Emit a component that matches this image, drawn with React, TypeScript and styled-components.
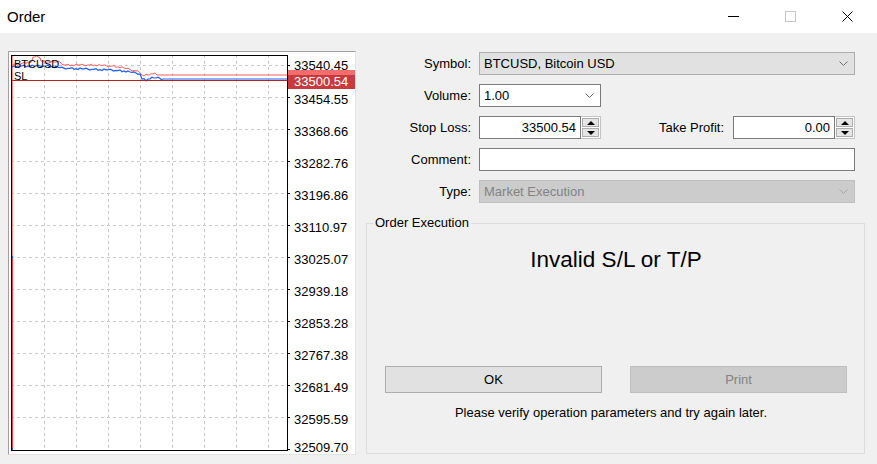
import React from 'react'
import styled, { createGlobalStyle } from 'styled-components'

const GlobalStyle = createGlobalStyle`
  html, body {
    margin: 0;
    padding: 0;
    background: #f0f0f0;
  }
  body {
    font-family: "Liberation Sans", Arial, sans-serif;
    font-size: 13px;
    color: #000;
  }
`

const Window = styled.div`
  width: 877px;
  height: 464px;
  display: flex;
  flex-direction: column;
  background: #f0f0f0;
  overflow: hidden;
`

const TitleBar = styled.div`
  height: 33px;
  flex-shrink: 0;
  background: #fff;
  display: flex;
  align-items: center;
  padding-right: 1px;
`

const Title = styled.div`
  flex: 1;
  padding-left: 7px;
  font-size: 15px;
  color: #000;
`

const CaptionButton = styled.div`
  width: 57px;
  height: 33px;
  display: flex;
  align-items: center;
  justify-content: center;
`

const Body = styled.div`
  flex: 1;
  display: flex;
  padding: 18px 0 10px 8px;
  min-height: 0;
`

const ChartPanel = styled.div`
  width: 348px;
  height: 404px;
  box-sizing: border-box;
  background: #fff;
  border: 1px solid;
  border-color: #a0a0a0 #e3e3e3 #e3e3e3 #a0a0a0;
  flex-shrink: 0;

  svg {
    display: block;
  }
`

const Side = styled.div`
  width: 499px;
  margin-left: 10px;
  padding-top: 1px;
  display: flex;
  flex-direction: column;
`

const FormGrid = styled.div`
  display: grid;
  grid-template-columns: 105px 376px;
  grid-auto-rows: 23px;
  column-gap: 8px;
  row-gap: 9px;
`

const Label = styled.div`
  text-align: right;
  align-self: center;
  white-space: nowrap;
`

type ComboVariant = 'plain' | 'edit' | 'disabled'

const Combo = styled.div<{ $variant: ComboVariant; $width?: number }>`
  box-sizing: border-box;
  width: ${(p) => (p.$width ? `${p.$width}px` : '100%')};
  height: 23px;
  display: flex;
  align-items: center;
  padding: 0 6px 0 4px;
  background: ${(p) => (p.$variant === 'edit' ? '#fff' : p.$variant === 'disabled' ? '#cccccc' : '#e1e1e1')};
  border: 1px solid ${(p) => (p.$variant === 'edit' ? '#7a7a7a' : p.$variant === 'disabled' ? '#bfbfbf' : '#adadad')};
  color: ${(p) => (p.$variant === 'disabled' ? '#838383' : '#000')};
`

const ComboText = styled.span`
  flex: 1;
`

const Chevron = ({ color }: { color: string }) => (
  <svg width="9" height="5" viewBox="0 0 9 5">
    <path d="M0.5 0.5 L4.5 4.5 L8.5 0.5" fill="none" stroke={color} strokeWidth="1" />
  </svg>
)

const SpinRow = styled.div`
  display: flex;
  align-items: stretch;
`

const SpinField = styled.div`
  width: 122px;
  height: 23px;
  display: flex;
  flex-shrink: 0;
`

const SpinInput = styled.div`
  flex: 1;
  box-sizing: border-box;
  background: #fff;
  border: 1px solid #7a7a7a;
  display: flex;
  align-items: center;
  justify-content: flex-end;
  padding-right: 4px;
`

const Spinner = styled.div`
  width: 20px;
  box-sizing: border-box;
  border: 1px solid #c4c4c4;
  border-left: none;
  background: #fff;
  padding: 1px;
  display: flex;
  flex-direction: column;
  gap: 1px;
`

const SpinButton = styled.div<{ $down?: boolean }>`
  flex: 1;
  background: #e5e5e5;
  border: 1px solid #adadad;
  display: flex;
  align-items: center;
  justify-content: center;

  &::after {
    content: '';
    width: 0;
    height: 0;
    border-left: 4px solid transparent;
    border-right: 4px solid transparent;
    ${(p) => (p.$down ? 'border-top: 4px solid #000;' : 'border-bottom: 4px solid #000;')}
  }
`

const InlineLabel = styled.div`
  flex: 1;
  text-align: right;
  align-self: center;
  padding-right: 9px;
`

const TextBox = styled.div`
  box-sizing: border-box;
  height: 23px;
  background: #fff;
  border: 1px solid #7a7a7a;
`

const GroupBox = styled.fieldset`
  flex: 1;
  margin: 12px 0 0 0;
  padding: 0;
  min-width: 0;
  border: 1px solid #dcdcdc;
  display: flex;
  flex-direction: column;
`

const GroupTitle = styled.legend`
  padding: 0 2px;
  margin-left: 6px;
  line-height: 16px;
  font-size: 13px;
`

const GroupContent = styled.div`
  display: flex;
  flex-direction: column;
  align-items: stretch;
  padding: 0 17px 0 18px;
`

const Result = styled.div`
  margin-top: 16px;
  font-size: 22.5px;
  line-height: 25px;
  text-align: center;
`

const ButtonRow = styled.div`
  margin-top: 94px;
  display: grid;
  grid-template-columns: 1fr 1fr;
  column-gap: 28px;
`

const Button = styled.div<{ $disabled?: boolean }>`
  height: 27px;
  box-sizing: border-box;
  display: flex;
  align-items: center;
  justify-content: center;
  background: ${(p) => (p.$disabled ? '#cccccc' : '#e1e1e1')};
  border: 1px solid ${(p) => (p.$disabled ? '#bfbfbf' : '#adadad')};
  color: ${(p) => (p.$disabled ? '#838383' : '#000')};
`

const Message = styled.div`
  margin-top: 12px;
  padding-right: 10px;
  line-height: 16px;
  text-align: center;
`

// chart drawing, in page coordinates through the viewBox
const PLOT = { left: 11, right: 287, top: 55, bottom: 450 }
const gridX = [44, 76, 108, 140, 172, 204, 236, 268]
const gridY = [65, 97, 129, 161, 193, 225, 257, 289, 321, 353, 385, 417, 449]
const prices = [
  '33540.45', '33454.55', '33368.66', '33282.76', '33196.86', '33110.97', '33025.07',
  '32939.18', '32853.28', '32767.38', '32681.49', '32595.59', '32509.70',
]

const askKeys: [number, number][] = [
  [12, 65], [20, 64], [28, 62], [32, 62], [33, 57], [40, 57], [41, 61], [50, 62], [60, 62],
  [64, 65], [80, 65], [95, 65], [110, 66], [120, 67], [128, 69], [136, 71], [140, 72],
  [142, 75], [148, 75], [153, 74], [155, 72], [157, 75], [287, 75],
]
const bidKeys: [number, number][] = [
  [12, 67], [20, 66], [32, 66], [48, 66], [56, 67], [62, 68], [86, 69], [110, 70],
  [124, 71], [136, 73], [140, 74], [142, 79], [146, 80], [150, 78], [158, 78], [163, 79], [287, 79],
]

const jitter = [0, -1, 0, 1, 0, 0, -1, 1, 0, 1, -1, 0]

const buildLine = (keys: [number, number][], roughUntil: number) => {
  const pts: string[] = []
  let i = 0
  for (let k = 0; k < keys.length - 1; k++) {
    const [x0, y0] = keys[k]
    const [x1, y1] = keys[k + 1]
    const steps = Math.max(1, Math.round((x1 - x0) / 2))
    for (let s = 0; s < steps; s++) {
      const x = x0 + ((x1 - x0) * s) / steps
      let y = y0 + ((y1 - y0) * s) / steps
      if (x < roughUntil) y += jitter[i % jitter.length] * 0.8
      pts.push(`${x.toFixed(1)},${y.toFixed(1)}`)
      i++
    }
  }
  const last = keys[keys.length - 1]
  pts.push(`${last[0]},${last[1]}`)
  return pts.join(' ')
}

const FONT = '"Liberation Sans", Arial, sans-serif'

const Chart = () => (
  <svg width="346" height="402" viewBox="9 52 346 402">
    <defs>
      <clipPath id="askTag">
        <rect x="288" y="70" width="68" height="5" />
      </clipPath>
    </defs>
    <g stroke="#c8c8c8" strokeWidth="1" strokeDasharray="3 3">
      {gridX.map((x) => (
        <line key={`v${x}`} x1={x + 0.5} y1={PLOT.top} x2={x + 0.5} y2={PLOT.bottom} />
      ))}
      {gridY.slice(0, -1).map((y) => (
        <line key={`h${y}`} x1={PLOT.left} y1={y + 0.5} x2={PLOT.right} y2={y + 0.5} />
      ))}
    </g>
    <line x1="12.5" y1="56" x2="12.5" y2="256" stroke="#ff8a8a" />
    <line x1="12.5" y1="256" x2="12.5" y2="450" stroke="#ff3b3b" />
    <polyline points={buildLine(askKeys, 160)} fill="none" stroke="#ff5c5c" strokeWidth="1" />
    <polyline points={buildLine(bidKeys, 165)} fill="none" stroke="#1e5cff" strokeWidth="1.2" />
    <line x1={PLOT.left} y1="80.5" x2={PLOT.right} y2="80.5" stroke="#b82020" />
    <rect x="11" y="256" width="2" height="2" fill="#1e5cff" />
    <rect x="11" y="448" width="2" height="2" fill="#1e5cff" />
    <rect
      x={PLOT.left + 0.5}
      y={PLOT.top + 0.5}
      width={PLOT.right - PLOT.left}
      height={PLOT.bottom - PLOT.top}
      fill="none"
      stroke="#000"
    />
    <g stroke="#000">
      {gridY.map((y) => (
        <line key={`t${y}`} x1={PLOT.right} y1={y + 0.5} x2={PLOT.right + 3} y2={y + 0.5} />
      ))}
    </g>
    <g fontFamily={FONT} fontSize="11" fill="#000">
      <text x="14" y="68">BTCUSD</text>
      <text x="14" y="80">SL</text>
    </g>
    <g fontFamily={FONT} fontSize="13" fill="#000">
      {prices.map((p, i) => (
        <text key={p} x="294" y={i === 0 ? 70 : i === prices.length - 1 ? 452 : gridY[i] + 7}>
          {p}
        </text>
      ))}
    </g>
    <rect x="288" y="70" width="68" height="5" fill="#f46c6c" />
    <text x="294" y="84" fontFamily={FONT} fontSize="13" fill="#fff" clipPath="url(#askTag)">
      33518.93
    </text>
    <rect x="288" y="75" width="68" height="14" fill="#c83a3e" />
    <text x="294" y="86" fontFamily={FONT} fontSize="13" fill="#fff">
      33500.54
    </text>
  </svg>
)

const App = () => (
  <>
    <GlobalStyle />
    <Window>
      <TitleBar>
        <Title>Order</Title>
        <CaptionButton>
          <svg width="11" height="11" viewBox="0 0 11 11">
            <line x1="0" y1="5.5" x2="11" y2="5.5" stroke="#000" />
          </svg>
        </CaptionButton>
        <CaptionButton>
          <svg width="11" height="11" viewBox="0 0 11 11">
            <rect x="0.5" y="0.5" width="10" height="10" fill="none" stroke="#c4c4c4" />
          </svg>
        </CaptionButton>
        <CaptionButton>
          <svg width="11" height="11" viewBox="0 0 11 11">
            <path d="M0.5 0.5 L10.5 10.5 M10.5 0.5 L0.5 10.5" stroke="#000" strokeWidth="1" />
          </svg>
        </CaptionButton>
      </TitleBar>
      <Body>
        <ChartPanel>
          <Chart />
        </ChartPanel>
        <Side>
          <FormGrid>
            <Label>Symbol:</Label>
            <Combo $variant="plain">
              <ComboText>BTCUSD, Bitcoin USD</ComboText>
              <Chevron color="#707070" />
            </Combo>
            <Label>Volume:</Label>
            <Combo $variant="edit" $width={122}>
              <ComboText>1.00</ComboText>
              <Chevron color="#606060" />
            </Combo>
            <Label>Stop Loss:</Label>
            <SpinRow>
              <SpinField>
                <SpinInput>33500.54</SpinInput>
                <Spinner>
                  <SpinButton />
                  <SpinButton $down />
                </Spinner>
              </SpinField>
              <InlineLabel>Take Profit:</InlineLabel>
              <SpinField>
                <SpinInput>0.00</SpinInput>
                <Spinner>
                  <SpinButton />
                  <SpinButton $down />
                </Spinner>
              </SpinField>
            </SpinRow>
            <Label>Comment:</Label>
            <TextBox />
            <Label>Type:</Label>
            <Combo $variant="disabled">
              <ComboText>Market Execution</ComboText>
              <Chevron color="#a8a8a8" />
            </Combo>
          </FormGrid>
          <GroupBox>
            <GroupTitle>Order Execution</GroupTitle>
            <GroupContent>
              <Result>Invalid S/L or T/P</Result>
              <ButtonRow>
                <Button>OK</Button>
                <Button $disabled>Print</Button>
              </ButtonRow>
              <Message>Please verify operation parameters and try again later.</Message>
            </GroupContent>
          </GroupBox>
        </Side>
      </Body>
    </Window>
  </>
)

export default App
